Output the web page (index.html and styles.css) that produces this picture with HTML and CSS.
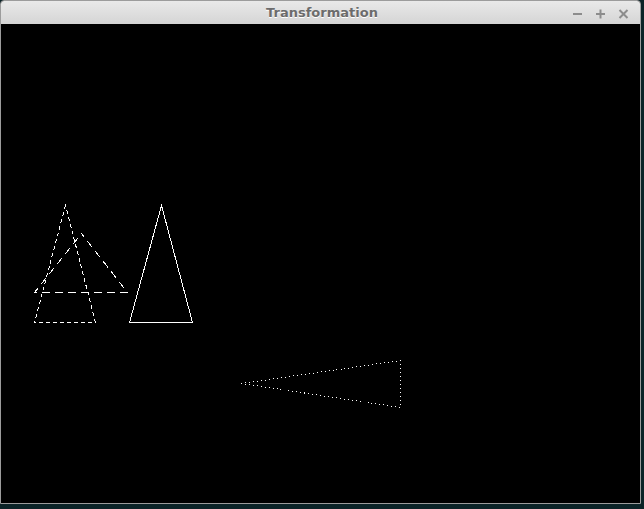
FILE: index.html
```html
<!DOCTYPE html>
<html>
<head>
<meta charset="utf-8">
<link rel="stylesheet" href="styles.css">
</head>
<body>
<div class="window">
  <div class="titlebar">
    <div class="spacer"></div>
    <div class="title">Transformation</div>
    <div class="controls">
      <svg class="btn" width="12" height="12" viewBox="0 0 12 12"><line x1="2" y1="7" x2="11" y2="7"/></svg>
      <svg class="btn" width="12" height="12" viewBox="0 0 12 12"><line x1="2" y1="7" x2="11" y2="7"/><line x1="6.5" y1="2.5" x2="6.5" y2="11.5"/></svg>
      <svg class="btn" width="12" height="12" viewBox="0 0 12 12"><line x1="2.5" y1="3" x2="10.5" y2="11"/><line x1="10.5" y1="3" x2="2.5" y2="11"/></svg>
    </div>
  </div>
  <svg class="canvas" width="639" height="479" viewBox="1 24 639 479">
    <rect x="1" y="24" width="639" height="479" fill="#000"/>
    <polygon class="solid" points="161.5,205.5 129.5,322.5 192.5,322.5"/>
    <polygon class="dash-short" points="65.5,205.5 34.5,322.5 95.5,322.5"/>
    <polygon class="dash-long" points="81.5,233.5 34.5,292.5 127.5,292.5"/>
    <polygon class="dotted" points="241.5,383.5 400.5,360.5 400.5,407.5"/>
  </svg>
</div>
</body>
</html>
```
FILE: styles.css
```css
html, body {
  margin: 0;
  padding: 0;
}
body {
  background: #0b2327;
  width: 644px;
  height: 509px;
  overflow: hidden;
}
.window {
  width: 639px;
  border: 1px solid #9c9c9c;
  border-radius: 4px 4px 0 0;
  background: #000;
  display: flex;
  flex-direction: column;
}
.titlebar {
  height: 23px;
  display: grid;
  grid-template-columns: 1fr auto 1fr;
  align-items: center;
  background: linear-gradient(#e9e9e9, #d5d5d5);
  border-radius: 3px 3px 0 0;
}
.title {
  font-family: "DejaVu Sans", sans-serif;
  font-weight: bold;
  font-size: 13px;
  color: #6c6c6c;
  text-shadow: 0 1px 0 #ffffff;
  padding-left: 3px;
  line-height: 23px;
}
.controls {
  display: flex;
  justify-content: flex-end;
  gap: 11px;
  padding-right: 11px;
  padding-top: 1px;
}
.btn line {
  stroke: #8c8c8c;
  stroke-width: 2;
}
.canvas {
  display: block;
}
.canvas polygon {
  fill: none;
  stroke: #ffffff;
  stroke-width: 1;
  shape-rendering: crispEdges;
}
.dash-short {
  stroke-dasharray: 4 3;
}
.dash-long {
  stroke-dasharray: 8 5;
  stroke-dashoffset: 8;
}
.dotted {
  stroke-dasharray: 1 3;
}
```
